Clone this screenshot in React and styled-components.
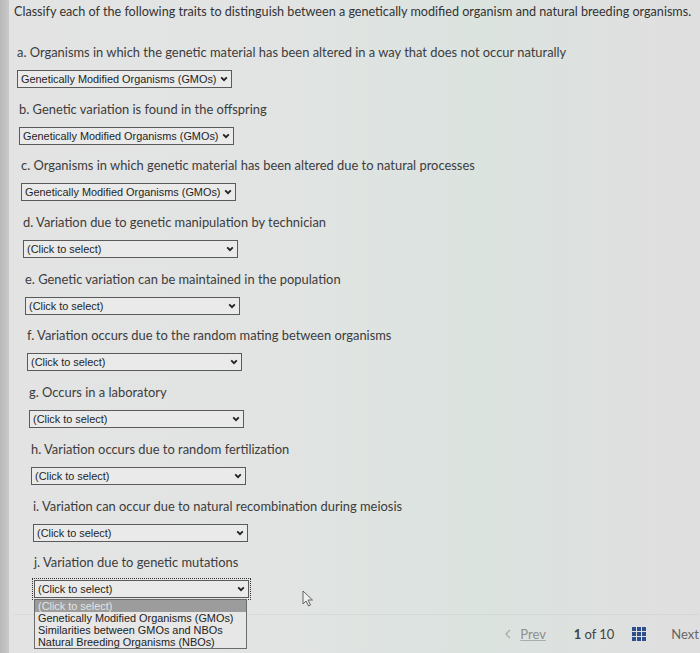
import React from "react";
import styled, { createGlobalStyle } from "styled-components";

const Global = createGlobalStyle`
  html, body { margin: 0; padding: 0; }
  body {
    width: 700px;
    height: 653px;
    overflow: hidden;
    background: #dfe3e1;
    font-family: Lato, "Open Sans", sans-serif;
  }
`;

const Screen = styled.div`
  position: relative;
  width: 700px;
  height: 653px;
  display: flex;
  background: linear-gradient(90deg, #e3e3e3 0%, #e2e4e3 35%, #dbe3df 70%, #e0dfdf 100%);
  overflow: hidden;
`;

const Bezel = styled.div`
  flex: 0 0 9px;
  background: linear-gradient(90deg, #b9b9b9, #c9c9c9);
`;

const Page = styled.div`
  flex: 1;
  min-width: 0;
  display: flex;
  flex-direction: column;
  padding: 3px 1px 0 5px;
  color: #3a3a3a;
`;

const Title = styled.div`
  font-size: 12.6px;
  line-height: 18px;
  white-space: nowrap;
  color: #333;
`;

const List = styled.div`
  display: flex;
  flex-direction: column;
  gap: 11.7px;
  margin-top: 22px;
`;

const Item = styled.div`
  display: flex;
  flex-direction: column;
  gap: 9px;
  padding-left: ${(p) => p.$indent}px;
`;

const Question = styled.div`
  font-size: 12.9px;
  line-height: 18px;
  white-space: nowrap;
  color: #3c3c3c;
`;

const SelectWrap = styled.div`
  position: relative;
  width: 215px;
`;

const SelectBox = styled.div`
  box-sizing: border-box;
  height: 18px;
  width: 215px;
  display: flex;
  align-items: center;
  justify-content: space-between;
  gap: 2px;
  padding: 0 3px 0 3px;
  border: 1px solid #5a5a5a;
  background: #e9eae9;
  font-family: "Liberation Sans", Arial, sans-serif;
  font-size: 10.9px;
  white-space: nowrap;
  color: #1f1f1f;
  outline: ${(p) => (p.$focused ? "1px dotted #333" : "none")};
  outline-offset: 1px;
`;

const Chevron = () => (
  <svg width="8" height="6" viewBox="0 0 8 6">
    <path d="M1.2 1.3 L4 4.2 L6.8 1.3" fill="none" stroke="#222" strokeWidth="1.8" />
  </svg>
);

const Menu = styled.div`
  position: absolute;
  left: 0;
  top: 19px;
  width: 213px;
  box-sizing: border-box;
  border: 1px solid #6b6b6b;
  background: #e6e7e6;
  font-family: "Liberation Sans", Arial, sans-serif;
  font-size: 10.9px;
  line-height: 12px;
  color: #222;
`;

const Option = styled.div`
  padding: 0 3px;
  white-space: nowrap;
  background: ${(p) => (p.$active ? "#9c9c9c" : "transparent")};
  color: ${(p) => (p.$active ? "#e4e4e4" : "#222")};
`;

const Footer = styled.div`
  margin-top: 16px;
  border-top: 1px solid rgba(0, 0, 0, 0.04);
  height: 41px;
  display: flex;
  align-items: center;
  justify-content: flex-end;
  font-family: Lato, "Open Sans", sans-serif;
  font-size: 13px;
`;

const PrevLink = styled.span`
  display: flex;
  align-items: center;
  gap: 9px;
  color: #8c8f8e;
  margin-right: 28px;
  span { text-decoration: underline; text-decoration-color: rgba(120,120,120,0.5); }
`;

const Counter = styled.span`
  color: #444;
  margin-right: 18px;
  b { font-weight: 700; margin-right: 3px; }
`;

const NextLink = styled.span`
  color: #666;
  margin-left: 25px;
`;

const Cursor = styled.svg`
  position: absolute;
  left: 302px;
  top: 590px;
`;

const items = [
  { l: "a. Organisms in which the genetic material has been altered in a way that does not occur naturally", v: "Genetically Modified Organisms (GMOs)", i: 3 },
  { l: "b. Genetic variation is found in the offspring", v: "Genetically Modified Organisms (GMOs)", i: 5 },
  { l: "c. Organisms in which genetic material has been altered due to natural processes", v: "Genetically Modified Organisms (GMOs)", i: 7 },
  { l: "d. Variation due to genetic manipulation by technician", v: "(Click to select)", i: 9 },
  { l: "e. Genetic variation can be maintained in the population", v: "(Click to select)", i: 11 },
  { l: "f. Variation occurs due to the random mating between organisms", v: "(Click to select)", i: 13 },
  { l: "g. Occurs in a laboratory", v: "(Click to select)", i: 15 },
  { l: "h. Variation occurs due to random fertilization", v: "(Click to select)", i: 17 },
  { l: "i. Variation can occur due to natural recombination during meiosis", v: "(Click to select)", i: 19 },
  { l: "j. Variation due to genetic mutations", v: "(Click to select)", i: 20, open: true },
];

const options = [
  "(Click to select)",
  "Genetically Modified Organisms (GMOs)",
  "Similarities between GMOs and NBOs",
  "Natural Breeding Organisms (NBOs)",
];

const GridIcon = () => (
  <svg width="14" height="14" viewBox="0 0 14 14">
    {[0, 5, 10].map((y) =>
      [0, 5, 10].map((x) => <rect key={x + "-" + y} x={x} y={y} width="4" height="4" fill="#2f4f8c" />)
    )}
  </svg>
);

export default function App() {
  return (
    <>
      <Global />
      <Screen>
        <Bezel />
        <Page>
          <Title>
            Classify each of the following traits to distinguish between a genetically modified organism and natural breeding organisms.
          </Title>
          <List>
            {items.map((it) => (
              <Item key={it.l} $indent={it.i}>
                <Question>{it.l}</Question>
                <SelectWrap>
                  <SelectBox $focused={it.open}>
                    <span>{it.v}</span>
                    <Chevron />
                  </SelectBox>
                  {it.open && (
                    <Menu>
                      {options.map((o, k) => (
                        <Option key={o} $active={k === 0}>{o}</Option>
                      ))}
                    </Menu>
                  )}
                </SelectWrap>
              </Item>
            ))}
          </List>
          <Footer>
            <PrevLink>
              <svg width="6" height="10" viewBox="0 0 6 10">
                <path d="M5 1 L1 5 L5 9" fill="none" stroke="#a5a8a7" strokeWidth="1.2" />
              </svg>
              <span>Prev</span>
            </PrevLink>
            <Counter>
              <b>1</b>of 10
            </Counter>
            <GridIcon />
            <NextLink>Next</NextLink>
          </Footer>
        </Page>
        <Cursor width="12" height="17" viewBox="0 0 12 17">
          <path d="M1 1 L1 14 L4 11 L6.5 16 L8.5 15 L6 10 L10.5 10 Z" fill="#eef0ee" stroke="#555" strokeWidth="0.9" />
        </Cursor>
      </Screen>
    </>
  );
}
